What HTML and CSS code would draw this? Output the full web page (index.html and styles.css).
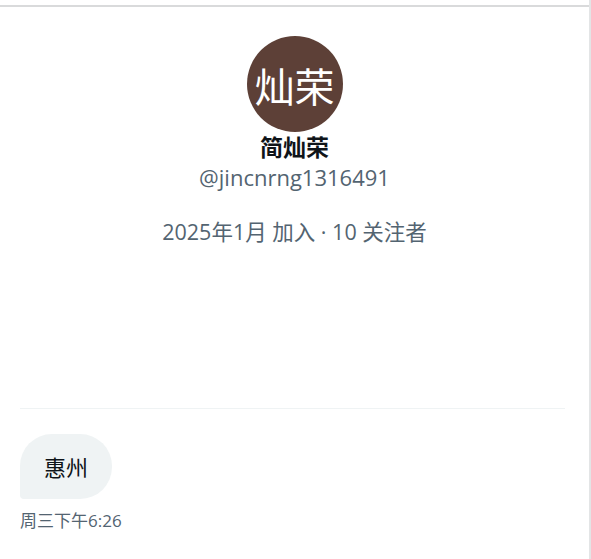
FILE: index.html
```html
<!DOCTYPE html>
<html lang="zh">
<head>
<meta charset="utf-8">
<title>简灿荣</title>
<link rel="stylesheet" href="styles.css">
</head>
<body>
<div class="page">
  <div class="top-rule"></div>
  <section class="profile">
    <div class="avatar">灿荣</div>
    <div class="name">简灿荣</div>
    <div class="handle">@jincnrng1316491</div>
    <div class="meta">2025年1月 加入 · 10 关注者</div>
  </section>
  <div class="divider"></div>
  <section class="messages">
    <div class="bubble">惠州</div>
    <div class="time">周三下午6:26</div>
  </section>
</div>
</body>
</html>
```
FILE: styles.css
```css
html, body {
  margin: 0;
  padding: 0;
  background: #ffffff;
}
body {
  font-family: "Open Sans", "Noto Sans CJK SC", sans-serif;
  color: #0f1419;
}
.page {
  width: 589px;
  height: 559px;
  border-right: 2px solid #e3e5e6;
  box-sizing: content-box;
  overflow: hidden;
}
.top-rule {
  height: 2px;
  margin-top: 5px;
  background: #d9dadb;
}
.profile {
  display: flex;
  flex-direction: column;
  align-items: center;
  padding-top: 29px;
}
.avatar {
  width: 96px;
  height: 96px;
  border-radius: 50%;
  background: #5d4037;
  color: #ffffff;
  display: flex;
  align-items: center;
  justify-content: center;
  font-family: "Noto Sans CJK SC", sans-serif;
  font-size: 40px;
  line-height: 1;
  padding-top: 1px;
  box-sizing: border-box;
}
.name {
  margin-top: 1px;
  font-family: "Noto Sans CJK SC", sans-serif;
  font-weight: 700;
  font-size: 23px;
  line-height: 26px;
}
.handle {
  margin-top: 4px;
  font-size: 22px;
  line-height: 28px;
  color: #536471;
}
.meta {
  margin-top: 27px;
  font-size: 21.5px;
  line-height: 28px;
  color: #536471;
}
.divider {
  height: 1px;
  background: #eff3f4;
  margin: 162px 24px 0 20px;
}
.messages {
  padding: 25px 0 0 20px;
  display: flex;
  flex-direction: column;
  align-items: flex-start;
}
.bubble {
  background: #eff3f4;
  border-radius: 32px 32px 32px 4px;
  padding: 18px 24px;
  height: 65px;
  box-sizing: border-box;
  font-family: "Noto Sans CJK SC", sans-serif;
  font-size: 22px;
  line-height: 29px;
  color: #0f1419;
}
.time {
  margin-top: 10px;
  font-size: 17px;
  line-height: 24px;
  color: #536471;
}
```
